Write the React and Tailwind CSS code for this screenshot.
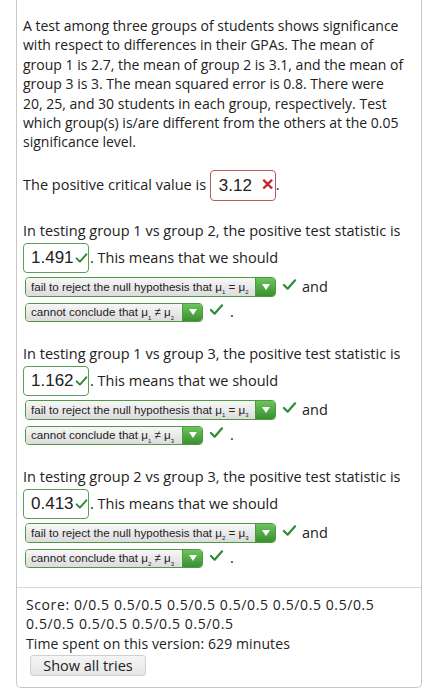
import React from "react";

const font = { fontFamily: '"Open Sans", "Noto Sans", sans-serif' };

function Check({ className = "" }) {
  return (
    <svg viewBox="0 0 16 14" className={className} fill="none">
      <path d="M2 7.5 L6 11.5 L14 2.5" stroke="#2e8b3a" strokeWidth="2.4" strokeLinecap="round" strokeLinejoin="round" />
    </svg>
  );
}

function Mu({ n }) {
  return (
    <span>
      μ<sub className="text-[6px] align-[-2px]">{n}</sub>
    </span>
  );
}

function Dropdown({ children, width, h }) {
  return (
    <div className={`flex ${h} ${width} rounded-[4px] border border-[#4e9a3e] overflow-hidden shrink-0`}>
      <div className="flex-1 flex items-center pl-[5px] bg-gradient-to-b from-[#f7f7f7] to-[#dcdcdc] text-[11.6px] leading-[14px] text-[#222] whitespace-nowrap" style={{ fontFamily: '"Liberation Sans", Arial, sans-serif' }}>
        <span>{children}</span>
      </div>
      <div className="w-[20px] shrink-0 flex items-center justify-center bg-gradient-to-b from-[#6cc45c] to-[#3a9030] border-l border-[#4e9a3e]">
        <svg viewBox="0 0 8 6" className="w-[8px] h-[6px]">
          <path d="M0 0 L8 0 L4 6 Z" fill="#fff" />
        </svg>
      </div>
    </div>
  );
}

function Section({ a, b, value, mt }) {
  return (
    <div className={`${mt} text-[14.5px]`}>
      <div className="h-[20px] leading-[20px] whitespace-nowrap">In testing group {a} vs group {b}, the positive test statistic is</div>
      <div className="mt-[2px] flex items-center h-[30px]">
        <div className="h-[30px] w-[66px] border border-[#5a9e5a] rounded-[4px] flex items-center pl-[7px] text-[#222]">
          <span className="text-[17px]" style={{ fontFamily: '"Liberation Sans", Arial, sans-serif' }}>{value}</span>
          <Check className="w-[13px] h-[12px] ml-[1px]" />
        </div>
        <span className="ml-[1px]">. This means that we should</span>
      </div>
      <div className="mt-[4px] flex items-center h-[20px] ml-[2px] leading-[18px]">
        <Dropdown width="w-[251px]" h="h-[20px]">
          fail to reject the null hypothesis that <Mu n={a} /> = <Mu n={b} />
        </Dropdown>
        <Check className="w-[15px] h-[13px] ml-[6px] -mt-[5px]" />
        <span className="ml-[5px]">and</span>
      </div>
      <div className="mt-[6px] flex items-center h-[19px] ml-[2px] leading-[18px]">
        <Dropdown width="w-[178px]" h="h-[19px]">
          cannot conclude that <Mu n={a} /> ≠ <Mu n={b} />
        </Dropdown>
        <Check className="w-[15px] h-[13px] ml-[6px] -mt-[5px]" />
        <span className="ml-[6px]">.</span>
      </div>
    </div>
  );
}

export default function App() {
  return (
    <div className="w-[436px] h-[700px] bg-white text-[#222] text-[14px]" style={font}>
      <div className="ml-[16px] w-[406px] border-x border-b border-[#c8c8c8] rounded-b-[5px]">
        <div className="px-[6px] pt-[16px]">
          <p className="leading-[19.4px] whitespace-nowrap">
            <span className="block">A test among three groups of students shows significance</span>
            <span className="block">with respect to differences in their GPAs. The mean of</span>
            <span className="block">group 1 is 2.7, the mean of group 2 is 3.1, and the mean of</span>
            <span className="block">group 3 is 3. The mean squared error is 0.8. There were</span>
            <span className="block">20, 25, and 30 students in each group, respectively. Test</span>
            <span className="block">which group(s) is/are different from the others at the 0.05</span>
            <span className="block">significance level.</span>
          </p>
          <div className="mt-[18px] flex items-center h-[31px] text-[14.5px]">
            <span>The positive critical value is&nbsp;</span>
            <div className="h-[31px] w-[66px] border border-[#b85a5a] rounded-[4px] flex items-center pl-[8px]">
              <span className="text-[17px]" style={{ fontFamily: '"Liberation Sans", Arial, sans-serif' }}>3.12</span>
              <span className="ml-[9px] text-[#c0262b] text-[16px] font-bold" style={{ fontFamily: '"Liberation Sans", Arial, sans-serif' }}>✕</span>
            </div>
            <span>.</span>
          </div>
          <Section a={1} b={2} value="1.491" mt="mt-[20px]" />
          <Section a={1} b={3} value="1.162" mt="mt-[22px]" />
          <Section a={2} b={3} value="0.413" mt="mt-[22px]" />
          <div className="h-[19px]" />
        </div>
        <div className="border-t border-[#d8d8d8] px-[9px] pt-[7px] pb-[11px] text-[14px] leading-[19.5px]">
          <div className="tracking-[0.6px] whitespace-nowrap">Score: 0/0.5 0.5/0.5 0.5/0.5 0.5/0.5 0.5/0.5 0.5/0.5</div>
          <div className="tracking-[0.6px]">0.5/0.5 0.5/0.5 0.5/0.5 0.5/0.5</div>
          <div className="tracking-[0.1px]">Time spent on this version: 629 minutes</div>
          <button className="mt-[2px] ml-[4px] h-[21px] w-[116px] border border-[#d0d0d0] rounded-[3px] bg-gradient-to-b from-[#f6f6f6] to-[#e6e6e6] text-[14.5px] leading-[19px]">
            Show all tries
          </button>
        </div>
      </div>
    </div>
  );
}
